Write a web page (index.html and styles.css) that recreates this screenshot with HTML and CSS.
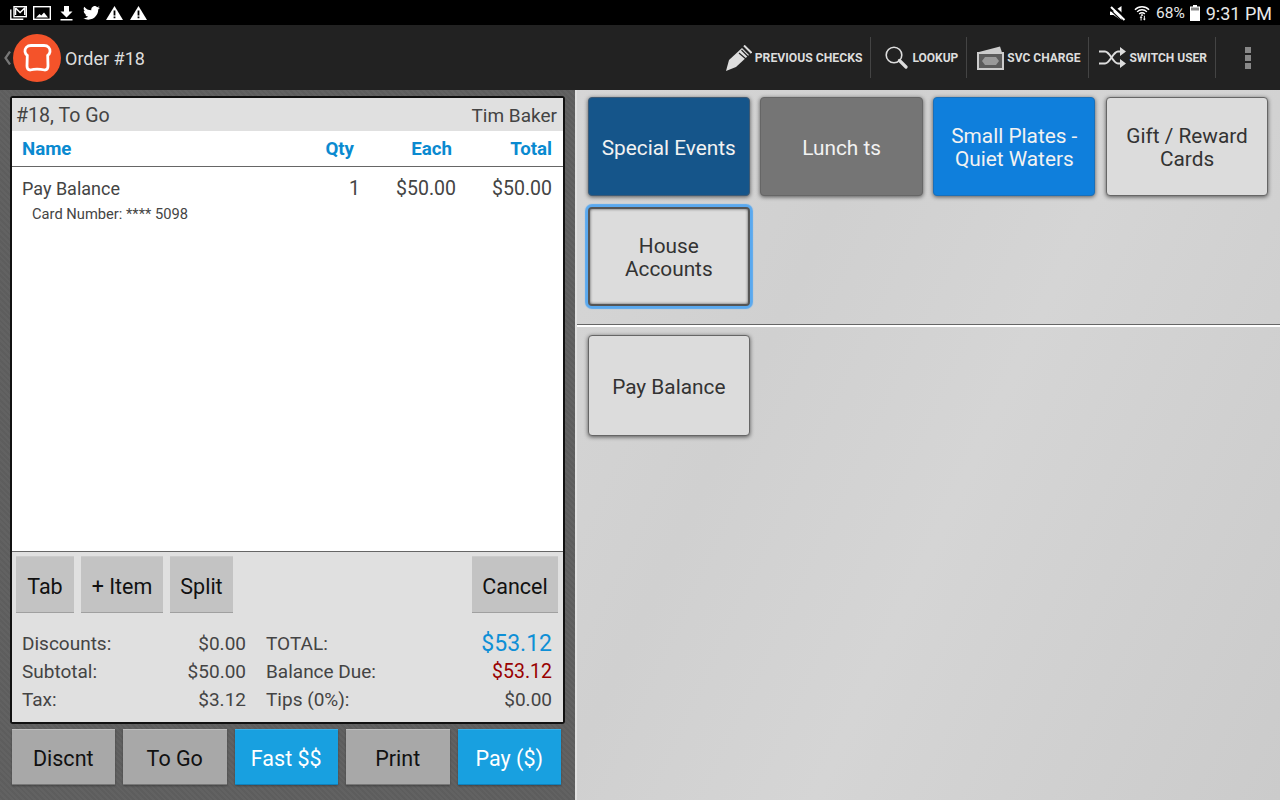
FILE: index.html
```html
<!DOCTYPE html>
<html lang="en">
<head>
<meta charset="utf-8">
<title>Order #18</title>
<link rel="stylesheet" href="styles.css">
</head>
<body>
<div class="status">
  <div class="status-icons">
    <svg class="si" width="17" height="14" viewBox="0 0 17 14"><rect x="4" y=".7" width="12.300" height="10" fill="#000" stroke="#fff" stroke-width="1.400"/><path d="M5.500 2 10.100 6.500 14.800 2v7" fill="none" stroke="#fff" stroke-width="1.500"/><path d="M5.500 2v7" stroke="#fff" stroke-width="1.500"/><path d="M.8 3.500v9.700h12.500" fill="none" stroke="#fff" stroke-width="1.400"/></svg>
    <svg class="si pic" width="18" height="14" viewBox="0 0 18 14"><rect x=".7" y=".7" width="16.600" height="12.600" fill="#000" stroke="#fff" stroke-width="1.400"/><path d="M3 11.500 6.500 8l1.800 1.500 2.700-3 4 5z" fill="#fff"/></svg>
    <svg class="si dl" width="13" height="15" viewBox="0 0 13 15"><path d="M4 0h5v5.500h3.500L6.500 11.500.5 5.500H4zM.5 13h12v1.600H.5z" fill="#fff"/></svg>
    <svg class="si tw" width="17" height="14" viewBox="0 0 24 20"><path d="M24 2.400a10 10 0 0 1-2.800.8A5 5 0 0 0 23.300.5a10 10 0 0 1-3.100 1.200 4.900 4.900 0 0 0-8.400 4.500A14 14 0 0 1 1.700.9a4.900 4.900 0 0 0 1.500 6.600 5 5 0 0 1-2.200-.6 4.900 4.900 0 0 0 3.900 4.900 5 5 0 0 1-2.200.1 4.900 4.900 0 0 0 4.600 3.400A9.900 9.900 0 0 1 0 17.300 14 14 0 0 0 7.500 19.500c9.100 0 14.100-7.500 14.100-14v-.6A10 10 0 0 0 24 2.400z" fill="#fff"/></svg>
    <svg class="si wa" width="17" height="14" viewBox="0 0 17 14"><path d="M8.500 0 17 14H0z" fill="#fff"/><path d="M7.600 4.500h1.800v5H7.600zM7.600 10.500h1.800v1.800H7.600z" fill="#000"/></svg>
    <svg class="si wb" width="17" height="14" viewBox="0 0 17 14"><path d="M8.500 0 17 14H0z" fill="#fff"/><path d="M7.600 4.500h1.800v5H7.600zM7.600 10.500h1.800v1.800H7.600z" fill="#000"/></svg>
  </div>
  <div class="status-right">
    <svg class="mute" width="16" height="15" viewBox="0 0 16 15"><path d="M0 5.500h3.500L11.500 0v14.500L3.500 9H0z" fill="#fff"/><path d="M2.500 0 16 12" stroke="#000" stroke-width="2.500"/><path d="M1 1 14.500 14" stroke="#fff" stroke-width="2"/><path d="M-1 2.500 12.500 15.500" stroke="#000" stroke-width="1.200"/></svg>
    <svg class="wifi" width="16" height="18" viewBox="0 0 17 18"><path d="M1 5.500a10.500 10.500 0 0 1 15 0M3.300 7.800a7.300 7.300 0 0 1 10.400 0M5.500 10a4.200 4.200 0 0 1 6 0" fill="none" stroke="#fff" stroke-width="1.500"/><path d="M8.500 9.500 10 12H7zM6 14l1.500-2 1.500 2H8v3H7v-3zM11 17l-1.500-2H10.500v-3h1v3H12.500z" fill="#fff"/></svg>
    <span class="pct">68%</span>
    <svg class="batt" width="10" height="16" viewBox="0 0 10 16"><path d="M3 0h4v1.500h3V16H0V1.500h3z" fill="#fff"/><path d="M1 2.500h8v3H1z" fill="#888"/></svg>
    <span class="clock">9:31 PM</span>
  </div>
</div>

<header class="toolbar">
  <div class="brand">
    <svg class="chev" width="7" height="14" viewBox="0 0 7 14"><path d="M6 .5 1.500 7 6 13.500" fill="none" stroke="#777" stroke-width="2.200"/></svg>
    <span class="logo">
      <svg width="29" height="30" viewBox="0 0 29 30"><path d="M8 2.500h13c4 0 6.500 3 6 6.300-.3 1.800-1 2.800-2.300 3.600l.3 10.600c0 2.500-1 4-3.200 4-4.800-1-10.800-1-14.600 0C5 27 4 25.500 4 23l.3-10.600C3 11.600 2.300 10.600 2 8.800 1.500 5.500 4 2.500 8 2.500z" fill="none" stroke="#fff" stroke-width="2.800"/></svg>
    </span>
    <span class="title">Order #18</span>
  </div>
  <nav class="actions">
    <div class="action prev">
      <svg width="26" height="26" viewBox="0 0 26 26"><path d="M0 26 3 15 16 3l7 7L10 22z" fill="#ddd"/><path d="M17.500 1.500l7 7 1-1.500c.5-2-4-6.500-6.500-6.500zM13 8l7 6M15.500 5l7 7" fill="none" stroke="#222" stroke-width="1.200"/><path d="M18 0.500 25.500 8" stroke="#ddd" stroke-width="2"/></svg>
      <span>PREVIOUS CHECKS</span>
    </div>
    <div class="action look">
      <svg width="23" height="23" viewBox="0 0 23 23"><circle cx="9" cy="9" r="7.800" fill="none" stroke="#ddd" stroke-width="1.600"/><path d="M14.500 14.500 21 21" stroke="#ddd" stroke-width="3.200" stroke-linecap="round"/></svg>
      <span>LOOKUP</span>
    </div>
    <div class="action svc">
      <svg width="27" height="24" viewBox="0 0 27 24"><path d="M0 6.500 23 .5l2 6z" fill="#ccc"/><rect x="1" y="7" width="25" height="16" fill="#5c5c5c" stroke="#ccc" stroke-width="2"/><path d="M5 15 8 11h11l3 4-3 4H8z" fill="#9a9a9a"/></svg>
      <span>SVC CHARGE</span>
    </div>
    <div class="action swi">
      <svg width="27" height="21" viewBox="0 0 27 21"><path d="M0 4.500h6c5 0 8 12 13 12h3M0 16.500h6c5 0 8-12 13-12h3" fill="none" stroke="#ddd" stroke-width="2"/><path d="M21 0l6 4.500-6 4.500zM21 12l6 4.500-6 4.500z" fill="#ddd"/></svg>
      <span>SWITCH USER</span>
    </div>
    <div class="more"><i></i><i></i><i></i></div>
  </nav>
</header>

<main class="content">
  <section class="left">
    <div class="ticket">
      <div class="ticket-head"><span>#18, To Go</span><span>Tim Baker</span></div>
      <div class="cols">
        <span>Name</span><span class="r">Qty</span><span class="r">Each</span><span class="r">Total</span>
      </div>
      <div class="items">
        <div class="item">
          <span class="iname">Pay Balance</span><span class="r q">1</span><span class="r e">$50.00</span><span class="r">$50.00</span>
        </div>
        <div class="sub">Card Number: **** 5098</div>
      </div>
      <div class="foot">
        <div class="tools">
          <button class="tool tab">Tab</button>
          <button class="tool add">+ Item</button>
          <button class="tool split">Split</button>
          <button class="tool cancel">Cancel</button>
        </div>
        <div class="sums">
          <span>Discounts:</span><span class="r">$0.00</span><span class="lab2">TOTAL:</span><span class="r total">$53.12</span>
          <span>Subtotal:</span><span class="r">$50.00</span><span class="lab2">Balance Due:</span><span class="r due">$53.12</span>
          <span>Tax:</span><span class="r">$3.12</span><span class="lab2">Tips (0%):</span><span class="r">$0.00</span>
        </div>
      </div>
    </div>
    <div class="bottom">
      <button class="bb">Discnt</button>
      <button class="bb">To Go</button>
      <button class="bb blue">Fast $$</button>
      <button class="bb">Print</button>
      <button class="bb blue">Pay ($)</button>
    </div>
  </section>
  <section class="right">
    <div class="cats">
      <button class="tile navy">Special Events</button>
      <button class="tile grey">Lunch ts</button>
      <button class="tile azure">Small Plates - Quiet Waters</button>
      <button class="tile">Gift / Reward Cards</button>
      <button class="tile selected">House Accounts</button>
    </div>
    <div class="divider"></div>
    <div class="prods">
      <button class="tile pay">Pay Balance</button>
    </div>
  </section>
</main>
</body>
</html>
```
FILE: styles.css
```css
* { box-sizing: border-box; }
html, body { margin: 0; height: 100%; }
body {
  width: 1280px;
  height: 800px;
  overflow: hidden;
  display: flex;
  flex-direction: column;
  font-family: Roboto, "Liberation Sans", sans-serif;
  background: #000;
}
button { font-family: inherit; margin: 0; cursor: pointer; }

/* status bar */
.status {
  height: 25px;
  flex: none;
  background: #000;
  display: flex;
  justify-content: space-between;
  align-items: center;
  color: #e8e8e8;
}
.status-icons { display: flex; align-items: center; padding-left: 10px; }
.si { display: block; flex: none; margin-top: 1px; }
.pic { margin-left: 6px; }
.dl { margin-left: 9px; }
.tw { margin-left: 10px; }
.wa { margin-left: 6px; }
.wb { margin-left: 7px; }
.status-right { display: flex; align-items: center; padding-right: 8px; }
.mute { margin-right: 8px; margin-top: 1px; }
.wifi { margin-right: 6px; }
.pct { font-size: 15.500px; margin-right: 5px; }
.batt { margin-right: 6px; margin-top: 1px; }
.clock { font-size: 18px; padding-top: 2px; }

/* toolbar */
.toolbar {
  height: 65px;
  flex: none;
  background: #222;
  display: flex;
  justify-content: space-between;
  align-items: center;
}
.brand { display: flex; align-items: center; padding-left: 4px; }
.chev { flex: none; margin-right: 2px; }
.logo {
  width: 48px;
  height: 48px;
  border-radius: 50%;
  background: #f4532a;
  display: flex;
  align-items: center;
  justify-content: center;
}
.title { color: #ddd; font-size: 18px; margin-left: 4px; padding-top: 2px; }
.actions { display: flex; align-items: center; height: 41px; }
.action {
  height: 41px;
  display: flex;
  align-items: center;
  border-right: 1px solid #444;
  color: #ddd;
  font-size: 12px;
  font-weight: 700;
  white-space: nowrap;
}
.action span { margin-left: 3px; }
.prev { padding-right: 8px; font-size: 12.200px; }
.look { padding: 0 8px 0 14px; }
.look span { margin-left: 4px; }
.svc { padding: 0 8px 0 10px; }
.swi { padding: 0 8px 0 10px; }
.more {
  width: 64px;
  display: flex;
  flex-direction: column;
  align-items: center;
  gap: 2px;
}
.more i { display: block; width: 6px; height: 6px; background: #888; }

/* main */
.content { flex: 1; display: flex; min-height: 0; }
.left {
  width: 577px;
  flex: none;
  padding: 6px 12px 0 10px;
  background-color: #5f5f5f;
  background-image: repeating-linear-gradient(45deg, rgba(255,255,255,.02) 0 2px, rgba(0,0,0,.02) 2px 4px);
  border-right: 2px solid #e0e0e0;
  display: flex;
  flex-direction: column;
}
.ticket {
  height: 628px;
  width: 555px;
  flex: none;
  background: #fff;
  border: 2px solid #111;
  border-radius: 3px;
  display: flex;
  flex-direction: column;
  color: #444;
  font-size: 19px;
}
.ticket-head {
  height: 33px;
  flex: none;
  background: #e0e0e0;
  display: flex;
  justify-content: space-between;
  align-items: center;
  padding: 2px 6px 0 4px;
  color: #444;
}
.ticket-head span:first-child { font-size: 19.600px; }
.cols, .item {
  display: grid;
  grid-template-columns: 1fr 62px 98px 100px;
  padding: 0 11px 0 10px;
}
.cols {
  height: 36px;
  flex: none;
  padding-top: 7px;
  border-bottom: 1px solid #666;
  color: #0a8ad0;
  font-weight: 700;
  font-size: 18.700px;
}
.r { text-align: right; }
.items { flex: 1; padding-top: 10px; }
.item { height: 22px; font-size: 19.500px; align-items: baseline; }
.iname { font-size: 18px; }
.q { position: relative; left: 6px; }
.e { position: relative; left: 4px; }
.sub { font-size: 14.700px; padding: 6px 0 0 20px; }
.foot {
  height: 171px;
  flex: none;
  background: #e0e0e0;
  border-top: 1px solid #666;
}
.tools { display: flex; padding: 4px 5px 0 4px; gap: 7px; }
.tool {
  height: 57px;
  background: #c3c3c3;
  border: 0;
  border-bottom: 1px solid #a0a0a0;
  border-top: 1px solid #cbcbcb;
  color: #111;
  font-size: 21.500px;
  padding: 3px 0 0;
}
.tab { width: 58px; }
.add { width: 82px; }
.split { width: 63px; }
.cancel { width: 86px; margin-left: auto; }
.sums {
  display: grid;
  grid-template-columns: 150px 74px 1fr 110px;
  grid-auto-rows: 28px;
  align-items: center;
  padding: 16px 11px 0 10px;
}
.lab2 { padding-left: 20px; }
.total { color: #0f8fd6; font-size: 23px; }
.due { color: #990000; font-size: 19.500px; }

.bottom {
  display: grid;
  grid-template-columns: repeat(5, 1fr);
  gap: 8px;
  margin: 5px 2px 0 1.500px;
  height: 56px;
  flex: none;
}
.bb {
  background: #a8a8a8;
  border: 0;
  border-top: 1px solid #bdbdbd;
  border-bottom: 1px solid #777;
  color: #111;
  font-size: 21.500px;
  padding: 3px 0 0;
  box-shadow: 0 1px 2px rgba(0,0,0,.3);
}
.blue {
  background: #18a0e0;
  color: #fff;
  border-top-color: #3ab0e8;
  border-bottom-color: #0f80bb;
}

/* right */
.right {
  flex: 1;
  min-width: 0;
  background: linear-gradient(115deg, #d6d6d6 0%, #d0d0d0 30%, #d5d5d5 55%, #cbcbcb 100%);
  display: flex;
  flex-direction: column;
}
.cats {
  height: 234px;
  flex: none;
  display: grid;
  grid-template-columns: repeat(4, 162.250px);
  grid-auto-rows: 99px;
  column-gap: 10.500px;
  row-gap: 11px;
  padding: 7px 0 0 10.700px;
}
.divider {
  height: 3px;
  flex: none;
  background: #fff;
  border-top: 1px solid #666;
}
.prods {
  display: grid;
  grid-template-columns: repeat(4, 162.250px);
  column-gap: 10.500px;
  padding: 8px 0 0 10.700px;
}
.tile {
  height: 100%;
  border: 1px solid #666;
  border-radius: 4px;
  background: #dcdcdc;
  color: #333;
  font-size: 20.800px;
  line-height: 23px;
  padding: 3px 6px 0;
  box-shadow: 0 1px 4px rgba(0,0,0,.6);
}
.navy { background: #15558a; color: #f2f2f2; border-color: #3d5a75; }
.grey { background: #757575; color: #f2f2f2; }
.azure { background: #0f7fdc; color: #f2f2f2; border-color: #1a6fb8; }
.selected {
  box-shadow: inset 0 0 3px rgba(0,0,0,.6), 0 0 1px 3px #5aa9ef;
  border: 2px solid #555;
}
.pay { height: 101px; }
```
